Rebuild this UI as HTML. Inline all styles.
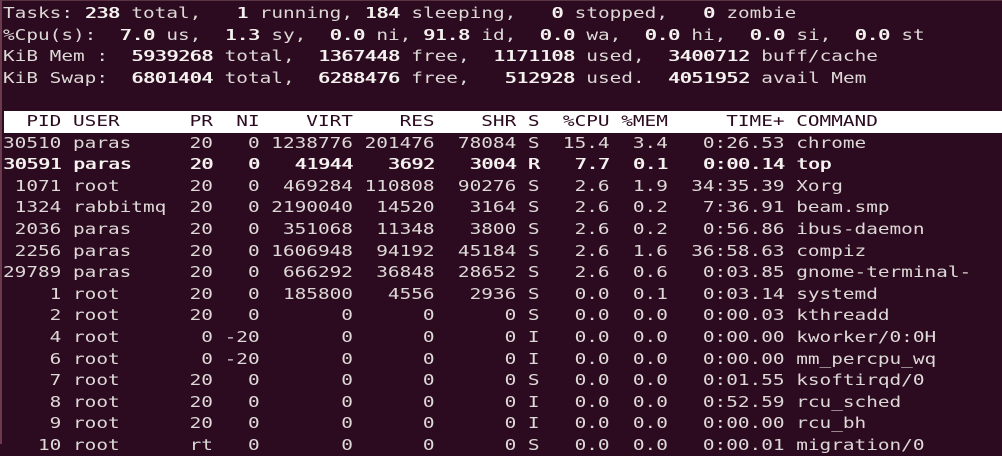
<!DOCTYPE html>
<html><head><meta charset="utf-8"><style>
html,body{margin:0;padding:0;}
body{width:1002px;height:444px;background:#2c0a1f;overflow:hidden;position:relative;}
.bl{position:absolute;left:0;top:0;width:2px;height:444px;background:#6b3a4c;}
.bt{position:absolute;left:0;top:0;width:1002px;height:1px;background:#5a3443;}
.hb{position:absolute;left:4px;top:111px;width:998px;height:22px;background:#ffffff;}
pre{position:absolute;left:3px;top:3px;margin:0;font-family:"DejaVu Sans Mono","Liberation Mono",monospace;font-size:15.5px;line-height:21.6px;color:#ddd9d6;transform:scaleX(1.25);transform-origin:0 0;white-space:pre;}
b{font-weight:normal;color:#f4f1ee;text-shadow:0.7px 0 0 #f4f1ee;}
.h{color:#2c0a1f;}
</style></head><body>
<div class="bt"></div><div class="bl"></div>
<div class="hb"></div>
<pre>Tasks: <b>238</b> total,   <b>1</b> running, <b>184</b> sleeping,   <b>0</b> stopped,   <b>0</b> zombie
%Cpu(s):  <b>7.0</b> us,  <b>1.3</b> sy,  <b>0.0</b> ni, <b>91.8</b> id,  <b>0.0</b> wa,  <b>0.0</b> hi,  <b>0.0</b> si,  <b>0.0</b> st
KiB Mem :  <b>5939268</b> total,  <b>1367448</b> free,  <b>1171108</b> used,  <b>3400712</b> buff/cache
KiB Swap:  <b>6801404</b> total,  <b>6288476</b> free,   <b>512928</b> used.  <b>4051952</b> avail Mem

<span class="h">  PID USER      PR  NI    VIRT    RES    SHR S  %CPU %MEM     TIME+ COMMAND</span>
30510 paras     20   0 1238776 201476  78084 S  15.4  3.4   0:26.53 chrome
<b>30591 paras     20   0   41944   3692   3004 R   7.7  0.1   0:00.14 top</b>
 1071 root      20   0  469284 110808  90276 S   2.6  1.9  34:35.39 Xorg
 1324 rabbitmq  20   0 2190040  14520   3164 S   2.6  0.2   7:36.91 beam.smp
 2036 paras     20   0  351068  11348   3800 S   2.6  0.2   0:56.86 ibus-daemon
 2256 paras     20   0 1606948  94192  45184 S   2.6  1.6  36:58.63 compiz
29789 paras     20   0  666292  36848  28652 S   2.6  0.6   0:03.85 gnome-terminal-
    1 root      20   0  185800   4556   2936 S   0.0  0.1   0:03.14 systemd
    2 root      20   0       0      0      0 S   0.0  0.0   0:00.03 kthreadd
    4 root       0 -20       0      0      0 I   0.0  0.0   0:00.00 kworker/0:0H
    6 root       0 -20       0      0      0 I   0.0  0.0   0:00.00 mm_percpu_wq
    7 root      20   0       0      0      0 S   0.0  0.0   0:01.55 ksoftirqd/0
    8 root      20   0       0      0      0 I   0.0  0.0   0:52.59 rcu_sched
    9 root      20   0       0      0      0 I   0.0  0.0   0:00.00 rcu_bh
   10 root      rt   0       0      0      0 S   0.0  0.0   0:00.01 migration/0</pre>
</body></html>
